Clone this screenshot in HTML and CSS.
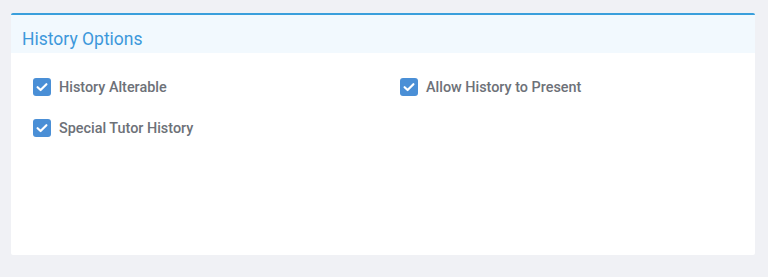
FILE: index.html
```html
<!DOCTYPE html>
<html>
<head>
<meta charset="utf-8">
<link rel="stylesheet" href="styles.css">
</head>
<body>
<div class="card">
  <div class="card-header">History Options</div>
  <div class="card-body">
    <div class="option">
      <span class="box"><svg viewBox="0 0 18 18" width="18" height="18"><path d="M4.6 9.2 L7.6 12 L13.4 6.2" fill="none" stroke="#fff" stroke-width="2.2" stroke-linecap="round" stroke-linejoin="round"/></svg></span>
      <span class="label">History Alterable</span>
    </div>
    <div class="option">
      <span class="box"><svg viewBox="0 0 18 18" width="18" height="18"><path d="M4.6 9.2 L7.6 12 L13.4 6.2" fill="none" stroke="#fff" stroke-width="2.2" stroke-linecap="round" stroke-linejoin="round"/></svg></span>
      <span class="label">Allow History to Present</span>
    </div>
    <div class="option">
      <span class="box"><svg viewBox="0 0 18 18" width="18" height="18"><path d="M4.6 9.2 L7.6 12 L13.4 6.2" fill="none" stroke="#fff" stroke-width="2.2" stroke-linecap="round" stroke-linejoin="round"/></svg></span>
      <span class="label">Special Tutor History</span>
    </div>
  </div>
</div>
</body>
</html>
```
FILE: styles.css
```css
html, body {
  margin: 0;
  padding: 0;
  background: #f0f1f5;
  font-family: Roboto, "Liberation Sans", sans-serif;
}
body {
  padding: 13px 13px 0 11px;
}
.card {
  width: 744px;
  height: 242px;
  box-sizing: border-box;
  background: #ffffff;
  border-top: 2px solid #3a9fdc;
  border-radius: 2px;
  display: flex;
  flex-direction: column;
}
.card-header {
  background: #f2f9fe;
  color: #3d98db;
  font-size: 17.5px;
  line-height: 20px;
  padding: 14px 11px 4px 11px;
}
.card-body {
  display: grid;
  grid-template-columns: 367px 1fr;
  row-gap: 23px;
  padding: 25px 22px 0 22px;
}
.option {
  display: flex;
  align-items: center;
  gap: 8px;
  height: 18px;
}
.box {
  width: 18px;
  height: 18px;
  border-radius: 3px;
  background: #4a8fd6;
  display: block;
  flex: none;
}
.box svg {
  display: block;
}
.label {
  font-size: 14.4px;
  font-weight: 500;
  color: #6d7178;
}
```
